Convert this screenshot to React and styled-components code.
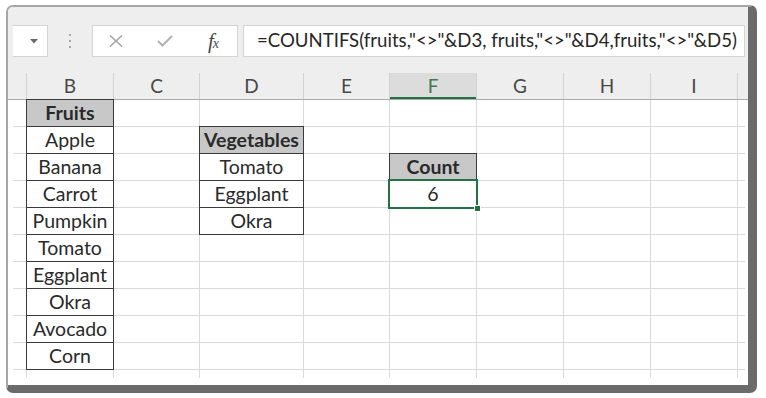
import React from "react";
import styled, { createGlobalStyle } from "styled-components";

const Global = createGlobalStyle`
  html, body { margin: 0; padding: 0; background: #ffffff; }
  body { font-family: Lato, "Open Sans", sans-serif; }
`;

const COLS = "13px 86px 85px 103px 85px 86px 86px 86px 86px 1fr";

const Page = styled.div`
  width: 766px;
  height: 398px;
  box-sizing: border-box;
  padding: 5px 0 0 6px;
`;

const Frame = styled.div`
  width: 751px;
  height: 388px;
  box-sizing: border-box;
  border-style: solid;
  border-color: #a6a6a6 #6b6b6b #6b6b6b #a6a6a6;
  border-width: 2px 9px 8px 2px;
  border-radius: 7px;
  overflow: hidden;
  background: #ffffff;
  display: flex;
  flex-direction: column;
`;

const Toolbar = styled.div`
  height: 66px;
  box-sizing: border-box;
  padding: 18px 3px 0 5px;
  background: #eeeeee;
  display: flex;
  align-items: flex-start;
`;

const NameBox = styled.div`
  width: 35px;
  height: 32px;
  box-sizing: border-box;
  background: #ffffff;
  border: 1px solid #d4d4d4;
  border-left: none;
  display: flex;
  align-items: center;
  justify-content: flex-end;
  padding-right: 9px;
`;

const Dots = styled.div`
  width: 44px;
  height: 32px;
  display: flex;
  flex-direction: column;
  align-items: center;
  justify-content: center;
  gap: 4px;
`;

const Dot = styled.span`
  width: 2px;
  height: 2px;
  background: #a8a8a8;
`;

const FuncBox = styled.div`
  width: 146px;
  height: 32px;
  box-sizing: border-box;
  background: #ffffff;
  border: 1px solid #d4d4d4;
  display: grid;
  grid-template-columns: 45px 54px 42px;
  align-items: center;
  justify-items: center;
`;

const Fx = styled.span`
  font-family: "Liberation Serif", "DejaVu Serif", serif;
  font-style: italic;
  font-size: 21px;
  color: #4a4a4a;
  line-height: 1;
  letter-spacing: -1px;
  small { font-size: 14px; }
`;

const FormulaBox = styled.div`
  flex: 1;
  margin-left: 5px;
  height: 32px;
  box-sizing: border-box;
  background: #ffffff;
  border: 1px solid #d4d4d4;
  padding-left: 13px;
  font-size: 18.6px;
  line-height: 29px;
  color: #262626;
  white-space: nowrap;
  overflow: hidden;
`;

const HeaderRow = styled.div`
  background: #eeeeee;
  padding: 0 3px 0 5px;
  border-bottom: 1px solid #ababab;
`;

const HeaderGrid = styled.div`
  display: grid;
  grid-template-columns: ${COLS};
  column-gap: 1px;
  height: 26px;
  background: #d2d2d2;
`;

const ColHead = styled.div`
  background: ${(p) => (p.$selected ? "#dcdcdc" : "#eeeeee")};
  color: ${(p) => (p.$selected ? "#3f7a55" : "#484848")};
  box-shadow: ${(p) => (p.$selected ? "inset 0 -2px 0 #217346" : "none")};
  font-size: 19px;
  line-height: 26px;
  text-align: center;
`;

const Body = styled.div`
  flex: 1;
  background: #ffffff;
  padding: 0 3px 7px 5px;
`;

const BodyGrid = styled.div`
  display: grid;
  grid-template-columns: ${COLS};
  grid-template-rows: repeat(10, 26px) 8px;
  gap: 1px;
  background: #dadada;
`;

const Cell = styled.div`
  position: relative;
  background: ${(p) => (p.$head ? "#c8c8c8" : "#ffffff")};
  font-weight: ${(p) => (p.$head ? 700 : 400)};
  color: #2a2a2a;
  font-size: 19.5px;
  line-height: 26px;
  text-align: center;
  white-space: nowrap;
  box-shadow: ${(p) =>
    p.$selected
      ? "0 0 0 2px #217346"
      : p.$boxed
      ? "0 0 0 1px #3a3a3a"
      : "none"};
  z-index: ${(p) => (p.$selected ? 2 : p.$boxed ? 1 : 0)};

  &::after {
    content: "";
    display: ${(p) => (p.$selected ? "block" : "none")};
    position: absolute;
    right: -5px;
    bottom: -5px;
    width: 5px;
    height: 5px;
    background: #217346;
    border: 1px solid #ffffff;
  }
`;

const letters = ["", "B", "C", "D", "E", "F", "G", "H", "I", ""];

const fruits = ["Apple", "Banana", "Carrot", "Pumpkin", "Tomato", "Eggplant", "Okra", "Avocado", "Corn"];

function buildRows() {
  const rows = [];
  for (let r = 0; r < 11; r++) {
    const row = Array.from({ length: 10 }, () => null);
    if (r === 0) row[1] = { text: "Fruits", head: true };
    else if (r <= 9) row[1] = { text: fruits[r - 1] };
    if (r === 1) row[3] = { text: "Vegetables", head: true };
    if (r === 2) row[3] = { text: "Tomato" };
    if (r === 3) row[3] = { text: "Eggplant" };
    if (r === 4) row[3] = { text: "Okra" };
    if (r === 2) row[5] = { text: "Count", head: true };
    if (r === 3) row[5] = { text: "6", selected: true };
    rows.push(row);
  }
  return rows;
}

const rows = buildRows();

export default function App() {
  return (
    <>
      <Global />
      <Page>
        <Frame>
          <Toolbar>
            <NameBox>
              <svg width="8" height="5" viewBox="0 0 8 5">
                <path d="M0 0 L8 0 L4 4.5 Z" fill="#6a6a6a" />
              </svg>
            </NameBox>
            <Dots>
              <Dot />
              <Dot />
              <Dot />
            </Dots>
            <FuncBox>
              <svg width="14" height="12" viewBox="0 0 14 12">
                <path d="M1 0.5 L13 11.5 M13 0.5 L1 11.5" stroke="#a2a2a2" strokeWidth="1.5" fill="none" />
              </svg>
              <svg width="16" height="12" viewBox="0 0 16 12">
                <path d="M1 6 L5.5 10.5 L15 1" stroke="#b2b2b2" strokeWidth="2" fill="none" />
              </svg>
              <Fx>
                f<small>x</small>
              </Fx>
            </FuncBox>
            <FormulaBox>=COUNTIFS(fruits,"&lt;&gt;"&amp;D3, fruits,"&lt;&gt;"&amp;D4,fruits,"&lt;&gt;"&amp;D5)</FormulaBox>
          </Toolbar>
          <HeaderRow>
            <HeaderGrid>
              {letters.map((l, i) => (
                <ColHead key={i} $selected={l === "F"}>
                  {l}
                </ColHead>
              ))}
            </HeaderGrid>
          </HeaderRow>
          <Body>
            <BodyGrid>
              {rows.map((row, r) =>
                row.map((c, i) => (
                  <Cell
                    key={`${r}-${i}`}
                    $head={c && c.head}
                    $boxed={!!c}
                    $selected={c && c.selected}
                  >
                    {c ? c.text : ""}
                  </Cell>
                ))
              )}
            </BodyGrid>
          </Body>
        </Frame>
      </Page>
    </>
  );
}
